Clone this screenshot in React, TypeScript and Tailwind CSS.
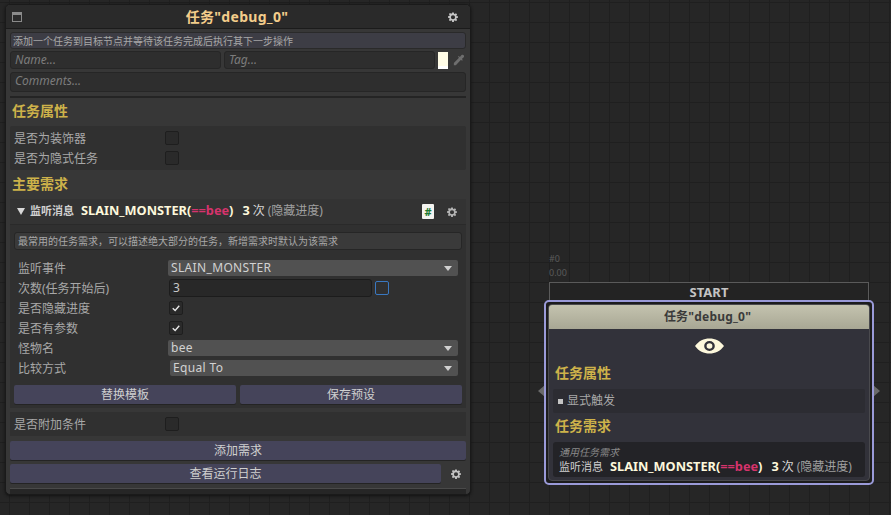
import React from 'react';

const Gear = ({ className = '' }: { className?: string }) => (
  <svg viewBox="0 0 24 24" className={className} fill="currentColor">
    <path
      fillRule="evenodd"
      d="M10 1h4l.6 3.2 1.8.8 2.7-1.9 2.8 2.8-1.9 2.7.8 1.8L24 10v4l-3.2.6-.8 1.8 1.9 2.7-2.8 2.8-2.7-1.9-1.8.8L14 24h-4l-.6-3.2-1.8-.8-2.7 1.9-2.8-2.8 1.9-2.7-.8-1.8L0 14v-4l3.2-.6.8-1.8-1.9-2.7 2.8-2.8L7.6 4l1.8-.8L10 1zm2 6.5a5 5 0 1 0 0 10 5 5 0 0 0 0-10z"
    />
  </svg>
);

const Check = () => (
  <svg viewBox="0 0 14 14" className="w-[14px] h-[14px]" fill="none" stroke="#e8e8e8" strokeWidth="1.6">
    <path d="M3.2 7.2 6 9.8l4.8-5.4" />
  </svg>
);

const CheckBox = ({ checked = false }: { checked?: boolean }) => (
  <div className="w-[14px] h-[14px] rounded-[2px] bg-[#2a2a2a] border border-[#1e1e1e] flex items-center justify-center">
    {checked && <Check />}
  </div>
);

const Caret = () => (
  <div className="w-0 h-0 border-l-[4px] border-r-[4px] border-t-[5px] border-l-transparent border-r-transparent border-t-[#d0d0d0]" />
);

const Dropdown = ({ value, inset = false }: { value: string; inset?: boolean }) => (
  <div
    className={`h-[16px] ${inset ? 'ml-[2px]' : ''} flex-1 rounded-[2px] bg-[#515151] flex items-center justify-between pl-[3px] pr-[6px] text-[#d2d2d2]`}
  >
    <span className="tracking-[0.35px]">{value}</span>
    <Caret />
  </div>
);

const Row = ({ label, wide = false, children }: { label: string; wide?: boolean; children: React.ReactNode }) => (
  <div className="flex items-center h-[20px]">
    <div className={`${wide ? 'w-[151px]' : 'w-[150px]'} shrink-0 pt-[2px] text-[#a8a8a8]`}>{label}</div>
    {children}
  </div>
);

const Button = ({ label, className = '' }: { label: string; className?: string }) => (
  <div
    className={`h-[19px] rounded-[2px] bg-[#45445a] shadow-[0_1px_0_#242424] flex items-center justify-center text-[#cfcfcf] ${className}`}
  >
    {label}
  </div>
);

const Req = ({ head }: { head: string }) => (
  <>
    <span className={head}>监听消息</span>
    <span className="ml-[7px] font-bold text-[12.75px] text-[#fdf8dc]">
      SLAIN_MONSTER(<span className="text-[#d6336c]">==bee</span>)
    </span>
    <span className="ml-[9px] font-bold text-[12.75px] text-[#fdf8dc]">3</span>
    <span className="ml-[3px] text-[#d8d8d8]">次</span>
    <span className="ml-[3px] text-[#a0a0a0]">(隐藏进度)</span>
  </>
);

export default function App() {
  return (
    <div
      className="relative w-[891px] h-[515px] overflow-hidden bg-[#262626] bg-[linear-gradient(#1f1f1f_1px,transparent_1px),linear-gradient(90deg,#1f1f1f_1px,transparent_1px)] bg-[size:20px_20px] bg-[position:9px_2px] text-[12px] leading-[16px]"
      style={{ fontFamily: '"Noto Sans", "Noto Sans CJK SC", sans-serif' }}
    >
      {/* inspector window */}
      <div className="absolute left-[5px] top-[4px] w-[466px] h-[491px] rounded-[5px] bg-[#373737] border border-[#1a1a1a] shadow-[0_1px_3px_#111] flex flex-col overflow-hidden">
        <div className="h-[24px] shrink-0 bg-[#2a2a2a] border-b border-[#1b1b1b] flex items-center justify-between pl-[6px] pr-[12px] relative">
          <div className="w-[10px] h-[10px] border border-[#8a8a8a] border-t-[3px]" />
          <div className="absolute left-0 right-[2px] text-center font-bold text-[14px] tracking-[0.3px] text-[#f3cd8b]">任务"debug_0"</div>
          <Gear className="w-[10px] h-[10px] text-[#c4c4c4]" />
        </div>

        <div className="flex flex-col px-[4px] pt-[3px]">
          <div className="h-[17px] rounded-[3px] bg-[#3d3d45] border border-[#2a2a2a] pl-[2px] flex items-center text-[10px] text-[#a8a8a8]">
            添加一个任务到目标节点并等待该任务完成后执行其下一步操作
          </div>
          <div className="flex items-center mt-[2px] h-[18px]">
            <div className="w-[211px] h-[18px] rounded-[3px] bg-[#2e2e2e] border border-[#262626] pl-[4px] italic text-[12px] text-[#7c7c7c] flex items-center">
              Name...
            </div>
            <div className="ml-[3px] w-[211px] h-[18px] rounded-[3px] bg-[#2e2e2e] border border-[#262626] pl-[4px] italic text-[12px] text-[#7c7c7c] flex items-center">
              Tag...
            </div>
            <div className="ml-[3px] w-[10px] h-[17px] bg-[#fffce6] border-b-[3px] border-b-white" />
            <svg viewBox="0 0 14 14" className="ml-[5px] w-[12px] h-[12px]" fill="#6e6e6e">
              <path d="M1 13v-2.500L7 4.500 5.800 3.300l1-1L8 3.500 10 1.200c.7-.6 1.900-.5 2.500.2s.6 1.800 0 2.400l-2.200 2 1.200 1.200-1 1L9.300 6.800l-6 6.200H1z" />
            </svg>
          </div>
          <div className="mt-[3px] h-[20px] rounded-[3px] bg-[#2e2e2e] border border-[#262626] pl-[4px] italic text-[12px] leading-[15px] text-[#7c7c7c]">
            Comments...
          </div>
          <div className="mt-[4px] h-[2px] bg-[#242424]" />

          <div className="mt-[4px] h-[18px] pl-[2px] font-bold text-[14px] leading-[18px] text-[#cdb24a]">任务属性</div>
          <div className="mt-[6px] h-[44px] rounded-[2px] bg-[#303030] pl-[4px] pt-[2px]">
            <Row label="是否为装饰器" wide>
              <CheckBox />
            </Row>
            <Row label="是否为隐式任务" wide>
              <CheckBox />
            </Row>
          </div>

          <div className="mt-[5px] h-[18px] pl-[2px] font-bold text-[14px] leading-[18px] text-[#cdb24a]">主要需求</div>
          <div className="mt-[6px] h-[26px] bg-[#333333] border-b border-[#2a2a2a] pl-[7px] pr-[9px] flex items-center">
            <div className="w-0 h-0 border-l-[4px] border-r-[4px] border-t-[7px] border-l-transparent border-r-transparent border-t-[#d8d8d8] mr-[5px]" />
            <div className="pb-[2px] whitespace-nowrap">
              <Req head="font-bold text-[11px] text-[#d0d0d0]" />
            </div>
            <div className="ml-auto flex items-center">
              <div className="w-[12px] h-[15px] bg-[#f4f4f0] rounded-[1px] flex items-center justify-center text-[11px] font-bold text-[#1e7a32]">#</div>
              <Gear className="ml-[13px] w-[10px] h-[10px] text-[#b4b4b4]" />
            </div>
          </div>

          <div className="bg-[#303030] px-[4px] pt-[7px] pb-[4px]">
            <div className="h-[18px] rounded-[3px] bg-[#3a3a3a] border border-[#262626] pl-[3px] flex items-center text-[10px] text-[#a8a8a8]">
              最常用的任务需求，可以描述绝大部分的任务，新增需求时默认为该需求
            </div>
            <div className="mt-[6px] pl-[4px] pr-[4px] pt-[2px]">
              <Row label="监听事件">
                <Dropdown value="SLAIN_MONSTER" />
              </Row>
              <Row label="次数(任务开始后)">
                <div className="ml-[1px] w-[203px] h-[18px] rounded-[3px] bg-[#282828] border border-[#1c1c1c] pl-[3px] flex items-center text-[#c8c8c8]">
                  3
                </div>
                <div className="ml-[3px] w-[14px] h-[14px] rounded-[2px] border border-[#3a78c0]" />
              </Row>
              <Row label="是否隐藏进度">
                <div className="ml-[1px]">
                  <CheckBox checked />
                </div>
              </Row>
              <Row label="是否有参数">
                <div className="ml-[1px]">
                  <CheckBox checked />
                </div>
              </Row>
              <Row label="怪物名">
                <Dropdown value="bee" />
              </Row>
              <Row label="比较方式">
                <Dropdown value="Equal To" inset />
              </Row>
            </div>
            <div className="mt-[7px] flex gap-[4px]">
              <Button label="替换模板" className="flex-1" />
              <Button label="保存预设" className="flex-1" />
            </div>
          </div>

          <div className="mt-[4px] h-[24px] bg-[#303030] pl-[4px] flex items-center">
            <Row label="是否附加条件" wide>
              <CheckBox />
            </Row>
          </div>
          <Button label="添加需求" className="mt-[5px]" />
          <div className="mt-[4px] flex items-center">
            <Button label="查看运行日志" className="w-[431px]" />
            <Gear className="ml-[10px] w-[10px] h-[10px] text-[#c4c4c4]" />
          </div>
          <div className="mt-[5px] h-[6px] bg-[#262626] border-t border-[#4a4a4a]" />
        </div>
      </div>

      {/* task node */}
      <div className="absolute left-[549px] top-[252px] text-[9px] leading-[14px] text-[#5a5a5a]">
        <div>#0</div>
        <div>0.00</div>
      </div>
      <div className="absolute left-[549px] top-[282px] w-[320px] h-[20px] bg-[#232323] border border-[#5a5a5a] flex items-center justify-center font-bold text-[13px] text-[#c4c4c4]">
        START
      </div>
      <div className="absolute left-[538px] top-[385px] w-0 h-0 border-y-[6px] border-r-[7px] border-y-transparent border-r-[#6a6a6a]" />
      <div className="absolute left-[873px] top-[385px] w-0 h-0 border-y-[6px] border-l-[7px] border-y-transparent border-l-[#6a6a6a]" />
      <div className="absolute left-[544px] top-[300px] w-[330px] h-[185px] rounded-[5px] border-[2px] border-[#9a9ad8] bg-[#1c1c1c] p-[2px]">
        <div className="h-full rounded-[4px] bg-[#32323a] border border-[#4a4a4e] flex flex-col overflow-hidden">
          <div className="h-[24px] shrink-0 bg-[linear-gradient(#c4c3af,#a8a794)] flex items-center justify-center pr-[3px] font-bold tracking-[0.2px] text-[#3a3a3a]">
            任务"debug_0"
          </div>
          <div className="mt-[9px] flex justify-center">
            <svg viewBox="0 0 30 18" className="w-[29px] h-[16px]" preserveAspectRatio="none">
              <path
                fillRule="evenodd"
                fill="#fdf8dc"
                d="M0 9C4 3 9 .5 15 .5S26 3 30 9c-4 6-9 8.500-15 8.500S4 15 0 9zm15-5.500a5.500 5.500 0 1 0 0 11 5.500 5.500 0 0 0 0-11zm0 2.500a3 3 0 1 1 0 6 3 3 0 0 1 0-6z"
              />
            </svg>
          </div>
          <div className="mt-[9px] pl-[6px] font-bold text-[14px] leading-[20px] text-[#cdb24a]">任务属性</div>
          <div className="mt-[6px] mx-[4px] h-[24px] rounded-[2px] bg-[#2c2c32] pl-[5px] flex items-center text-[#a8a8a8]">
            <div className="w-[5px] h-[5px] bg-[#c4c4c4] mr-[4px]" />
            显式触发
          </div>
          <div className="mt-[3px] pl-[6px] font-bold text-[14px] leading-[20px] text-[#cdb24a]">任务需求</div>
          <div className="mt-[6px] mx-[4px] h-[35px] rounded-[3px] bg-[#232327] pl-[6px] pt-[3px]">
            <div className="italic text-[10px] leading-[14px] text-[#8a8a8a]">通用任务需求</div>
            <div className="whitespace-nowrap -mt-[1px]">
              <Req head="text-[11px] text-[#d0d0d0]" />
            </div>
          </div>
        </div>
      </div>
    </div>
  );
}
